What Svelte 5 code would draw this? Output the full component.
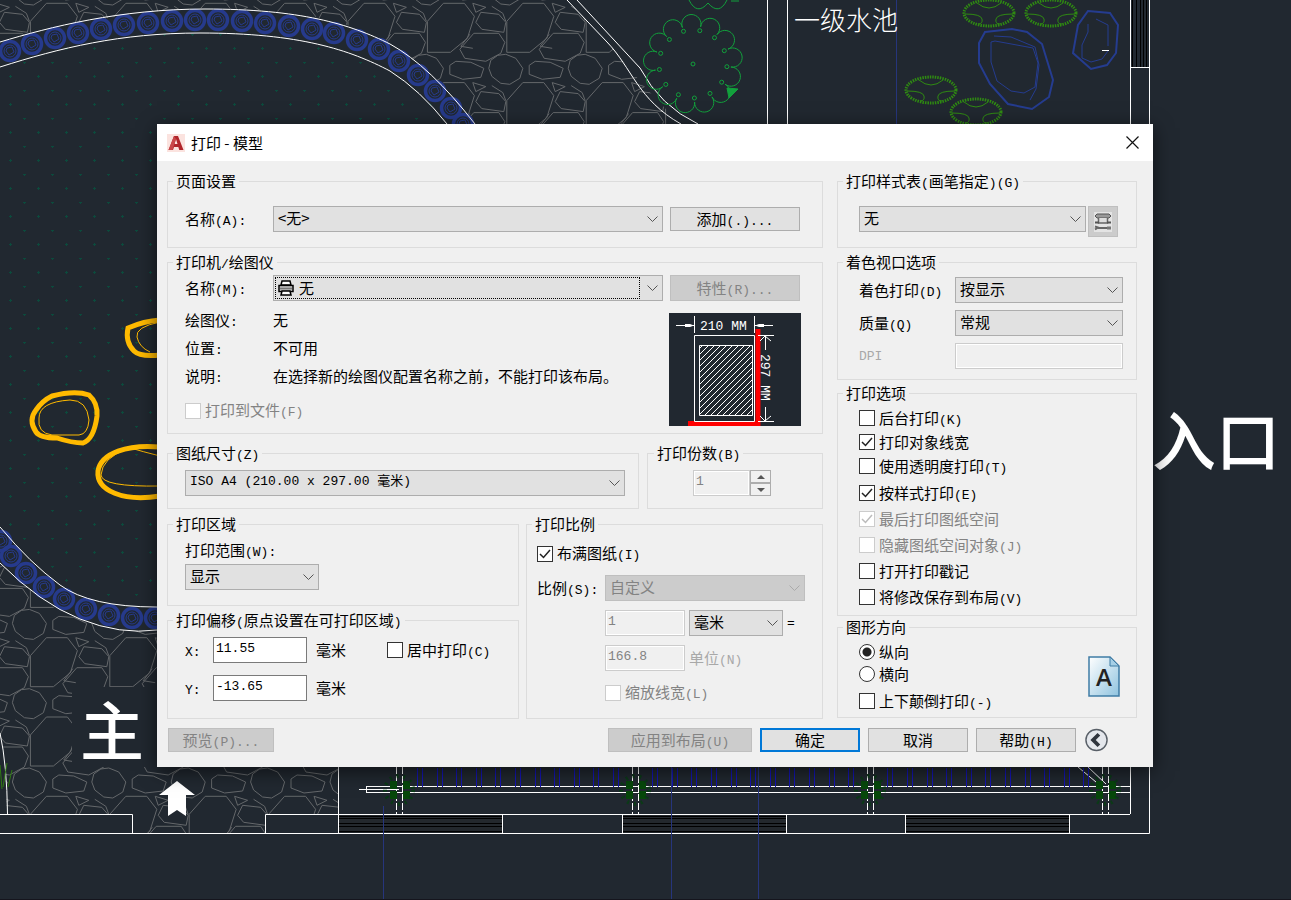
<script lang="ts">
	type Option = { label: string; checked?: boolean; disabled?: boolean };

	let copies = $state(1);
	let orientation = $state('portrait');

	const quickOptions: Option[] = [
		{ label: '后台打印(K)' },
		{ label: '打印对象线宽', checked: true },
		{ label: '使用透明度打印(T)' }
	];

	const styleOptions: Option[] = [
		{ label: '按样式打印(E)', checked: true },
		{ label: '最后打印图纸空间', checked: true, disabled: true },
		{ label: '隐藏图纸空间对象(J)', disabled: true },
		{ label: '打开打印戳记' },
		{ label: '将修改保存到布局(V)' }
	];

	const plotter = [
		['绘图仪:', '无'],
		['位置:', '不可用'],
		['说明:', '在选择新的绘图仪配置名称之前，不能打印该布局。']
	];

	// split a label into latin and chinese runs
	function runs(text: string) {
		return text.match(/[\x20-\x7e]+|[^\x20-\x7e]+/g) ?? [];
	}

	const range = (n: number) => Array.from({ length: n }, (_, i) => i);

	const pebbles = [
		[10, 51], [32, 44], [55, 38], [78, 33], [101, 29], [124, 25], [148, 23], [172, 21],
		[195, 20], [218, 20], [242, 21], [265, 23], [289, 26], [312, 29], [334, 33], [357, 40],
		[379, 49], [399, 61], [418, 75], [435, 91], [451, 108], [463, 124],
		[1, 541], [11, 556], [26, 573], [44, 587], [64, 599], [86, 609], [109, 615], [132, 618], [155, 618]
	];

	const tiles = range(17 * 12).map((i) => [(i % 17) * 79.4 - 125, Math.floor(i / 17) * 79.3 - 79]);
	const shrubs = [[989, 13], [1051, 13], [931, 90], [976, 112]];
	const posts = [399, 635, 870, 1105];
	const slats = range(36).map((i) => Math.round(417 + i * 19.6)).filter((x) => posts.every((p) => Math.abs(p - x - 3) > 12));
	const windows = [338, 622, 905];

	function polar(r: number, k: number) {
		const a = (k / 13) * Math.PI * 2 - 1.37;
		return [Math.round(r * Math.cos(a) * 10) / 10, Math.round(r * Math.sin(a) * 10) / 10];
	}

	const crown =
		`M${polar(38, 0)}` + range(13).map((k) => `A9.6 9.6 0 1 1 ${polar(38, k + 1)}`).join('');
</script>

{#snippet mixed(text: string)}{#each runs(text) as run}{#if /^[\x20-\x7e]/.test(run)}<span class="latin">{run}</span>{:else}{run}{/if}{/each}{/snippet}

{#snippet check(o: Option)}
	<label class="check" class:off={o.disabled}>
		<input type="checkbox" checked={o.checked} disabled={o.disabled} />
		<span>{@render mixed(o.label)}</span>
	</label>
{/snippet}

<main>
	<svg class="drawing" viewBox="0 0 1291 900" preserveAspectRatio="xMinYMin slice" aria-hidden="true">
		<defs>
			<g id="stones">
				<path d="M92 3h21l10 13-7 22-17 14H76V21zM50 12l18 2 7 8-2 10-22-3-6-7zM43 33h25l6 9-4 11-15 8-21-3-5-9zM25 61l15 1 13 6-3 9-18 2-13-5v-9zM42 3l13 4-10 5zM67 55l8-1 10 4 7 10-3 10-10 6-9-1-9-7-3-8 2-8zM75 21l-3-8-11-7M42 48l-12-2 9-12" />
			</g>
			<pattern id="dots" x="9" y="90" width="28" height="28" patternUnits="userSpaceOnUse">
				<path d="M0 14.5h3M1.5 13v3M14 .5h3M15.5 0v2" stroke="#0c4a3c" />
			</pattern>
			<clipPath id="paving">
				<path d="M0 0H567L607 42 645 87 680 124H475Q430 68 390 44C350 20 300 9 205 8Q120 10 0 42z" />
				<path d="M0 563Q40 603 80 619T157 630V767H338V814H265V833H133V814H7Q6 770 0 733zM72 687V767H157V687z" clip-rule="evenodd" />
			</clipPath>
			<g id="shrub" fill="none" stroke="#2f8a12">
				<ellipse rx="25" ry="13" stroke-width="3" stroke-dasharray="1.5 1" />
				<path d="M-12-10Q0 0 12-10M-24 1Q-8 1-7 6T-11 11M24 1Q8 1 7 6T11 11" />
			</g>
		</defs>

		<path d="M0 67C60 48 120 33 200 33C300 33 350 50 390 71Q430 98 447 124V607H157Q60 600 0 527z" fill="url(#dots)" />
		<g clip-path="url(#paving)" fill="none" stroke="#65686b">
			{#each tiles as [x, y]}
				<use href="#stones" transform="translate({x} {y})" />
			{/each}
		</g>

		<g fill="none" stroke="#263a8c">
			{#each pebbles as [x, y]}
				<circle cx={x} cy={y} r="9.5" stroke-width="3.5" />
				<circle cx={x} cy={y} r="6" />
				<path d="M{x - 3} {y - 3}l5-1 2 5-5 3-3-4z" />
			{/each}
		</g>

		<g fill="none" stroke="#fff">
			<path d="M0 42C50 27 120 9 205 9C300 9 350 24 390 44Q430 66 475 124M0 67C60 48 120 33 200 33C300 33 350 50 390 71Q420 90 447 124" />
			<path d="M0 527Q30 563 60 585T157 607M0 563Q40 603 80 619T157 630" />
			<path d="M567 0L607 42C632 68 638 100 681 124M577 0L640 68Q660 106 698 124" />
			<path d="M767.5 0V124M787.5 0V124M1130.5 0V814M1149.5 0V833.5H0M1131 67.5h18" />
			<path d="M0 814.5H132.5V833M265.5 833V814.5H1130M338.5 767V833M0 733Q7 765 7.5 814" />
			<path d="M366 786.5H1130M366 792.5H1130M366.5 786V793M359 789.5h40M1078 767l24 20M1088 767l18 17" />
		</g>
		<path d="M1102 50.5h7" stroke="#fff" />

		<g stroke="#000">
			<path d="M1132.5 0V67M1136.5 0V67M1140.5 0V67M1143.5 0V67M1146.5 0V67" />
			{#each windows as x}
				<rect x={x + 0.5} y="814.5" width="164" height="19" fill="#23282d" stroke="#fff" />
				<path d="M{x + 1} 816.5h163M{x + 1} 818.5h163M{x + 1} 823.5h163M{x + 1} 826.5h163M{x + 1} 831.5h163" />
			{/each}
		</g>

		<g stroke="#1414b4">
			{#each slats as x}
				<path d="M{x + 0.5} 768v19M{x + 5.5} 768v19" />
			{/each}
		</g>
		{#each posts as x}
			<path d="M{x - 2.5} 767v47M{x + 3.5} 767v47" stroke="#fff" stroke-dasharray="7 2" />
			<g fill="#07480b">
				<rect x={x - 9} y="781" width="7" height="8" /><rect x={x + 4} y="781" width="7" height="8" />
				<rect x={x - 9} y="791" width="7" height="8" /><rect x={x + 4} y="791" width="7" height="8" />
			</g>
			<circle cx={x} cy="790" r="14" fill="none" stroke="#0b3a17" stroke-width="4" stroke-dasharray="2 5" />
		{/each}
		<path d="M383.5 806V900M671.5 767V900M758.5 767V900M896.5 0V124" stroke="#26357c" />
		<path d="M0 899.5H1291" stroke="#15151d" />

		<g fill="none" stroke="#12a03c">
			<g transform="translate(693 64)">
				<path d={crown} />
				{#each range(13) as k}
					<circle cx={polar(34, k)[0]} cy={polar(34, k)[1]} r="2" />
				{/each}
				<circle r="2" />
				<path d="M34 24l11 1-9 9z" fill="#12a03c" />
			</g>
			<path d="M689 0Q697 16 708 3Q719 16 727 0M731 1h8" />
		</g>
		<path d="M0 765l2 24M7 763l-4 24M12 770l-4 17" stroke="#2f7a12" />
		{#each shrubs as [x, y]}
			<use href="#shrub" transform="translate({x} {y})" />
		{/each}

		<g fill="none" stroke="#253c8f">
			<path d="M985 32l27-3 15 3 15 12 11 36-4 17-17 12-24-5-18-20-11-21V43zM1088 11l22 2 8 12-2 28-9 12-16 4-18-16 5-28z" stroke-width="2" />
			<path d="M994 36l17 1 24 10 4 18-3 24-6 11M991 42l4-1 38 7 5 15-3 24-11 6-13-2-14-10-6-19zM1088 24v8l-6 13v13l9 4 11-3 6-8M1096 19l12 6v21" />
		</g>

		<g fill="none" stroke="#ffba00">
			<path d="M160 320Q144 321 128 328Q125 342 134 351Q140 357 160 355M52 396Q75 390 89 395Q98 403 97 416Q94 439 83 443Q72 443 57 438Q40 438 36 432Q28 420 36 410Q42 401 52 396zM160 447C128 444 101 453 98 471C96 491 124 502 160 496" stroke-width="5" />
			<path d="M160 322Q135 327 137 337T150 352M70 400Q87 400 89 420Q88 434 79 435H52Q37 433 39 418Q39 402 70 400zM127 447Q144 452 160 456M160 486Q102 487 101 475Q102 458 127 449" />
		</g>

		<path d="M177 781l18 14h-9v21l-9-6-9 6v-21h-9z" fill="#fff" />
		<text class="tag" x="794" y="30">一级水池</text>
		<text class="sign" x="80" y="755">主</text>
		<text class="sign" x="1152" y="465">入口</text>
	</svg>

	<form class="dialog" aria-labelledby="dialog-title" onsubmit={(e) => e.preventDefault()}>
		<header>
			<svg class="logo" viewBox="0 0 18 18" aria-hidden="true">
				<rect width="18" height="18" fill="#fbe3df" />
				<path d="M1.5 16L7 2h4l5.5 14h-4.2l-1-3H7l-1 3zM7.5 10h3L9 5z" fill="#b0252b" fill-rule="evenodd" />
				<path d="M7 2l2 3-3.5 11h-4z" fill="#c9474a" />
			</svg>
			<h1 id="dialog-title">打印 - 模型</h1>
			<button class="close" type="button" aria-label="关闭">
				<svg viewBox="0 0 13 13"><path d="M.5.5l12 12M12.5.5l-12 12" fill="none" stroke="#111" stroke-width="1.2" /></svg>
			</button>
		</header>

		<div class="body">
			<div class="columns">
				<div class="column">
					<fieldset class="page-setup">
						<legend>页面设置</legend>
						<label for="setup">{@render mixed('名称(A):')}</label>
						<select id="setup"><option>&lt;无&gt;</option></select>
						<button type="button">{@render mixed('添加(.)...')}</button>
					</fieldset>

					<fieldset class="printer">
						<legend>{@render mixed('打印机/绘图仪')}</legend>
						<div class="details">
							<div class="name">
								<label for="printer">{@render mixed('名称(M):')}</label>
								<div class="focused">
									<select id="printer"><option>无</option></select>
									<svg class="device" viewBox="0 0 16 16" aria-hidden="true">
										<path d="M4 1h8l1 4H3z" fill="#fff" stroke="#000" stroke-width="1.5" />
										<path d="M1 5.5h14v6H1z" fill="#ddd" stroke="#000" stroke-width="1.5" />
										<path d="M2 8.5h12" stroke="#777" stroke-width="2" />
										<path d="M4 11h8l1 4H3z" fill="#fff" stroke="#000" stroke-width="1.5" />
									</svg>
								</div>
							</div>
							<dl>
								{#each plotter as [term, value]}
									<dt>{@render mixed(term)}</dt>
									<dd>{value}</dd>
								{/each}
							</dl>
							{@render check({ label: '打印到文件(F)', disabled: true })}
						</div>
						<div class="sheet">
							<button type="button" disabled>{@render mixed('特性(R)...')}</button>
							<svg viewBox="0 0 132 113" role="img" aria-label="210 x 297 MM">
								<defs>
									<pattern id="hatch" width="6" height="6" patternUnits="userSpaceOnUse">
										<path d="M-1 7L7-1M-1 1l2-2M5 7l2-2" stroke="#fff" />
									</pattern>
								</defs>
								<rect width="132" height="113" fill="#212830" />
								<path d="M89 16v97M19 110.5h72" stroke="#f00" stroke-width="5" />
								<path d="M25.5 22.5h60v86h-60z" fill="#212830" stroke="#fff" />
								<path d="M30.5 32.5h53v70h-53z" fill="url(#hatch)" stroke="#fff" />
								<path d="M25.5 3v17M85.5 3v17M7 12.5h18M86 12.5h18M89 22.5h16M89 108.5h16M96.5 23v14M96.5 94v14M91 28l5-5 6 5M91 103l5 5 6-5" fill="none" stroke="#fff" />
								<path d="M16 11h5l4 1.5-4 1.5h-5zM95 11h-5l-4 1.5 4 1.5h5z" fill="#fff" />
								<text x="31" y="17">210 MM</text>
								<text transform="translate(92 41) rotate(90)">297 MM</text>
							</svg>
						</div>
					</fieldset>

					<div class="paper-row">
						<fieldset class="paper">
							<legend>{@render mixed('图纸尺寸(Z)')}</legend>
							<select class="mono" aria-label="图纸尺寸"><option>ISO A4 (210.00 x 297.00 毫米)</option></select>
						</fieldset>
						<fieldset class="copies">
							<legend>{@render mixed('打印份数(B)')}</legend>
							<div class="spin">
								<input type="text" value={copies} disabled aria-label="打印份数" />
								<div class="arrows">
									<button type="button" aria-label="增加" onclick={() => copies++}><i class="up"></i></button>
									<button type="button" aria-label="减少" onclick={() => (copies = Math.max(1, copies - 1))}><i class="down"></i></button>
								</div>
							</div>
						</fieldset>
					</div>

					<div class="lower">
						<div class="lower-left">
							<fieldset class="area">
								<legend>打印区域</legend>
								<label for="area">{@render mixed('打印范围(W):')}</label>
								<select id="area"><option>显示</option></select>
							</fieldset>
							<fieldset class="offset">
								<legend>{@render mixed('打印偏移(原点设置在可打印区域)')}</legend>
								<div class="axis">
									<label class="latin" for="x">X:</label>
									<input id="x" type="text" value="11.55" />
									<span>毫米</span>
									{@render check({ label: '居中打印(C)' })}
								</div>
								<div class="axis">
									<label class="latin" for="y">Y:</label>
									<input id="y" type="text" value="-13.65" />
									<span>毫米</span>
								</div>
							</fieldset>
						</div>
						<fieldset class="scale">
							<legend>打印比例</legend>
							{@render check({ label: '布满图纸(I)', checked: true })}
							<div class="ratio">
								<label for="ratio">{@render mixed('比例(S):')}</label>
								<select id="ratio" disabled><option>自定义</option></select>
							</div>
							<div class="units">
								<input type="text" value="1" disabled aria-label="图纸单位" />
								<select aria-label="单位"><option>毫米</option></select>
								<span class="latin">=</span>
							</div>
							<div class="units">
								<input id="units" type="text" value="166.8" disabled />
								<label class="faint" for="units">{@render mixed('单位(N)')}</label>
							</div>
							<div class="weights">{@render check({ label: '缩放线宽(L)', disabled: true })}</div>
						</fieldset>
					</div>
				</div>

				<div class="column right">
					<fieldset class="styles">
						<legend>{@render mixed('打印样式表(画笔指定)(G)')}</legend>
						<select aria-label="打印样式表"><option>无</option></select>
						<button class="edit" type="button" disabled aria-label="编辑">
							<svg viewBox="0 0 18 20">
								<rect width="18" height="20" fill="#e4e4e4" />
								<path d="M3 2h12l2 2-2 2H3L1 4z" fill="#999" stroke="#555" />
								<path d="M4.5 6v5h9V6" fill="#ddd" stroke="#666" stroke-width="1.5" />
								<path d="M1 10.5h4M13 10.5h4" stroke="#555" stroke-width="2" />
								<path d="M1 14.5l3 1-3 2M4 16h10" fill="none" stroke="#666" stroke-width="2" />
								<path d="M13 14.5h4v3h-4z" fill="#777" />
							</svg>
						</button>
					</fieldset>

					<fieldset class="viewport">
						<legend>着色视口选项</legend>
						<label for="shade">{@render mixed('着色打印(D)')}</label>
						<select id="shade"><option>按显示</option></select>
						<label for="quality">{@render mixed('质量(Q)')}</label>
						<select id="quality"><option>常规</option></select>
						<label class="latin faint" for="dpi">DPI</label>
						<input id="dpi" type="text" disabled />
					</fieldset>

					<fieldset class="options">
						<legend>打印选项</legend>
						<div class="tight">
							{#each quickOptions as option}{@render check(option)}{/each}
						</div>
						{#each styleOptions as option}{@render check(option)}{/each}
					</fieldset>

					<fieldset class="orientation">
						<legend>图形方向</legend>
						<div class="choices">
							<label class="check"><input type="radio" value="portrait" bind:group={orientation} />纵向</label>
							<label class="check"><input type="radio" value="landscape" bind:group={orientation} />横向</label>
							<div class="flip">{@render check({ label: '上下颠倒打印(-)' })}</div>
						</div>
						<svg class="page" viewBox="0 0 32 41" aria-hidden="true">
							<defs>
								<linearGradient id="sky" x2="1" y2="1">
									<stop offset="0" stop-color="#fff" />
									<stop offset="1" stop-color="#8fc3df" />
								</linearGradient>
							</defs>
							<path d="M1 1h21l9 9v30H1z" fill="url(#sky)" stroke="#3f7ca5" stroke-width="1.5" />
							<path d="M22 1v9h9z" fill="#a5cfe6" stroke="#3f7ca5" />
							<text x="16" y="30">A</text>
						</svg>
					</fieldset>
				</div>
			</div>

			<footer>
				<button class="preview" type="button" disabled>{@render mixed('预览(P)...')}</button>
				<button class="apply" type="button" disabled>{@render mixed('应用到布局(U)')}</button>
				<button class="primary" type="submit">确定</button>
				<button type="button">取消</button>
				<button type="button">{@render mixed('帮助(H)')}</button>
				<button class="less" type="button" aria-label="收起选项">
					<svg viewBox="0 0 25 25">
						<circle cx="12.5" cy="12.5" r="11" fill="#e4e7ec" stroke="#596068" stroke-width="1.5" />
						<path d="M15 6.5l-6 6 6 6" fill="none" stroke="#2f353d" stroke-width="4" />
					</svg>
				</button>
			</footer>
		</div>
	</form>
</main>

<style>
	:global(body) {
		margin: 0;
		background: #212830;
	}

	main {
		position: relative;
		box-sizing: border-box;
		min-height: 100vh;
		padding: 124px 138px 133px 157px;
		overflow: hidden;
		font-family: 'Noto Sans CJK SC', sans-serif;
		font-size: 15px;
		line-height: 16px;
		color: #000;
	}

	.drawing {
		position: absolute;
		inset: 0;
		width: 100%;
		height: 100%;
	}

	.tag,
	.sign {
		fill: #fff;
		font-family: 'Noto Sans CJK SC', sans-serif;
	}

	.tag {
		font-size: 26px;
		font-weight: 300;
	}

	.sign {
		font-size: 64px;
		font-weight: 500;
	}

	.dialog {
		position: relative;
		min-width: 996px;
		background: #f0f0f0;
		box-shadow: 0 4px 18px rgba(0, 0, 0, 0.6);
	}

	header {
		display: flex;
		align-items: center;
		height: 37px;
		padding: 0 14px 0 10px;
		background: #fff;
	}

	.logo {
		width: 18px;
		height: 18px;
	}

	h1 {
		margin: 0 auto 0 6px;
		font-size: 15px;
		font-weight: 400;
		line-height: 18px;
	}

	.close {
		width: 13px;
		height: 13px;
		padding: 0;
		border: 0;
		background: none;
	}

	svg {
		display: block;
	}

	.body {
		padding: 12px 16px 15px 10px;
	}

	.columns {
		display: grid;
		grid-template-columns: 1fr 300px;
		gap: 14px;
	}

	.column {
		display: flex;
		flex-direction: column;
		gap: 6px;
	}

	.latin {
		font-family: 'Liberation Mono', monospace;
		font-size: 13px;
		line-height: 1;
	}

	fieldset {
		box-sizing: border-box;
		min-width: 0;
		margin: 0;
		border: 1px solid #dcdcdc;
	}

	legend {
		height: 16px;
		margin-left: 6px;
		padding: 0 3px;
		white-space: nowrap;
	}

	/* the legend's offset counts from the padding edge, so pull it back */
	.page-setup legend,
	.printer legend,
	.paper legend,
	.area legend,
	.offset legend {
		margin-left: -12px;
	}

	button,
	select,
	input {
		box-sizing: border-box;
		margin: 0;
		border-radius: 0;
		font: inherit;
		color: inherit;
	}

	button {
		height: 24px;
		padding: 0;
		border: 1px solid #adadad;
		background: #e1e1e1;
		line-height: 20px;
		white-space: nowrap;
	}

	button:disabled {
		border-color: #bfbfbf;
		background: #ccc;
		color: #838383;
	}

	select {
		appearance: none;
		width: 100%;
		min-width: 0;
		height: 26px;
		padding: 0 20px 2px 4px;
		border: 1px solid #adadad;
		background: #e1e1e1 url("data:image/svg+xml,%3Csvg xmlns='http://www.w3.org/2000/svg' width='11' height='7'%3E%3Cpath d='M.5.5l5 5 5-5' fill='none' stroke='%23555'/%3E%3C/svg%3E") no-repeat right 4px center;
		line-height: 22px;
	}

	select:disabled {
		border-color: #bfbfbf;
		background-color: #ccc;
		color: #838383;
		opacity: 1;
	}

	#ratio {
		background-image: url("data:image/svg+xml,%3Csvg xmlns='http://www.w3.org/2000/svg' width='11' height='7'%3E%3Cpath d='M.5.5l5 5 5-5' fill='none' stroke='%23aaa'/%3E%3C/svg%3E");
	}

	.mono {
		font-family: 'Liberation Mono', 'Noto Sans CJK SC', monospace;
		font-size: 13px;
	}

	input[type='text'] {
		height: 26px;
		padding: 0 2px 3px;
		border: 1px solid #7a7a7a;
		background: #fff;
		font-family: 'Liberation Mono', monospace;
		font-size: 13px;
	}

	input[type='text']:disabled {
		border-color: #ccc;
		background: #f0f0f0;
		box-shadow: inset 0 0 0 1px #fff;
		color: #838383;
	}

	.check {
		display: flex;
		align-items: center;
		gap: 4px;
		white-space: nowrap;
	}

	.check input {
		flex: none;
		appearance: none;
		width: 16px;
		height: 16px;
		border: 1px solid #333;
		background: #fff center no-repeat;
	}

	.check input[type='checkbox']:checked {
		background-image: url("data:image/svg+xml,%3Csvg xmlns='http://www.w3.org/2000/svg' width='12' height='10'%3E%3Cpath d='M1 5l3.5 3.5L11 1' fill='none' stroke='%23222' stroke-width='1.5'/%3E%3C/svg%3E");
	}

	.check input[type='checkbox']:disabled {
		border-color: #ccc;
	}

	.check input[type='checkbox']:checked:disabled {
		background-image: url("data:image/svg+xml,%3Csvg xmlns='http://www.w3.org/2000/svg' width='12' height='10'%3E%3Cpath d='M1 5l3.5 3.5L11 1' fill='none' stroke='%23bbb' stroke-width='1.5'/%3E%3C/svg%3E");
	}

	.check input[type='radio'] {
		border-radius: 50%;
	}

	.check input[type='radio']:checked {
		background: radial-gradient(circle, #222 4px, #fff 5px);
	}

	.off {
		color: #838383;
	}

	.faint {
		color: #a8a8a8;
	}

	.page-setup {
		display: grid;
		grid-template-columns: 88px 1fr 130px;
		align-items: center;
		padding: 17px 22px 15px 17px;
	}

	.page-setup select {
		width: auto;
		margin-right: 7px;
	}

	.printer {
		display: flex;
		gap: 6px;
		padding: 5px 21px 7px 17px;
	}

	.details {
		flex: 1;
	}

	.name {
		display: grid;
		grid-template-columns: 88px 1fr;
		align-items: center;
	}

	.focused {
		position: relative;
	}

	.focused::after {
		content: '';
		position: absolute;
		inset: 2px 23px 2px 2px;
		border: 1px dotted #000;
		pointer-events: none;
	}

	.focused select {
		display: block;
		padding: 0 20px 0 25px;
	}

	.device {
		position: absolute;
		left: 5px;
		top: 5px;
		width: 16px;
		height: 16px;
		pointer-events: none;
	}

	dl {
		display: grid;
		grid-template-columns: 88px 1fr;
		margin: 5px 0 12px;
		line-height: 28px;
	}

	dd {
		margin: 0;
		white-space: nowrap;
	}

	.sheet {
		width: 132px;
	}

	.sheet button {
		display: block;
		width: 130px;
		height: 26px;
		margin: 0 1px 12px;
	}

	.sheet svg {
		width: 132px;
		height: 113px;
	}

	.sheet text {
		fill: #fff;
		font-family: 'Liberation Mono', monospace;
		font-size: 13px;
	}

	.paper-row {
		display: flex;
		gap: 8px;
		margin-top: 5px;
	}

	.paper {
		flex: 1;
		padding: 9px 13px 12px 17px;
	}

	.paper select {
		display: block;
	}

	.copies {
		width: 176px;
		padding: 9px 0 12px;
	}

	.spin {
		display: flex;
		width: 78px;
		margin-left: 45px;
	}

	.spin input {
		width: 57px;
	}

	.arrows {
		display: flex;
		flex-direction: column;
		width: 21px;
	}

	.arrows button {
		display: flex;
		align-items: center;
		justify-content: center;
		height: 13px;
		background: #f0f0f0;
	}

	.up,
	.down {
		border: 4px solid transparent;
		border-top: 0;
		border-bottom-color: #555;
	}

	.down {
		border-bottom: 0;
		border-top: 4px solid #555;
	}

	.lower {
		display: grid;
		grid-template-columns: 352fr 297fr;
		gap: 7px;
		margin-top: 1px;
	}

	.lower-left {
		display: flex;
		flex-direction: column;
		gap: 6px;
	}

	.area {
		padding: 8px 17px 15px;
	}

	.area label {
		display: block;
		line-height: 20px;
	}

	.area select {
		display: block;
		width: 134px;
		margin-top: 4px;
	}

	.offset {
		flex: 1;
		padding: 9px 17px 17px;
	}

	.axis {
		display: flex;
		align-items: center;
	}

	.axis + .axis {
		margin-top: 12px;
	}

	.axis > label.latin {
		width: 28px;
		padding-top: 4px;
	}

	.axis input[type='text'] {
		width: 94px;
	}

	.axis > span {
		width: 71px;
		margin-left: 9px;
	}

	.scale {
		padding: 13px 17px 12px 10px;
	}

	.scale legend {
		margin-left: -5px;
	}

	.ratio {
		display: grid;
		grid-template-columns: 68px 1fr;
		align-items: center;
		margin-top: 13px;
	}

	.units {
		display: flex;
		align-items: center;
		gap: 4px;
		margin: 9px 0 0 68px;
	}

	.units input {
		width: 80px;
	}

	.units select {
		width: 94px;
	}

	.weights {
		margin: 13px 0 0 68px;
	}

	.styles {
		display: flex;
		align-items: flex-start;
		gap: 2px;
		padding: 17px 18px 10px 21px;
	}

	.right legend {
		margin-left: -16px;
	}

	.edit {
		display: flex;
		flex: none;
		align-items: center;
		justify-content: center;
		width: 30px;
		height: 31px;
	}

	.edit svg {
		width: 18px;
		height: 20px;
	}

	.viewport {
		display: grid;
		grid-template-columns: 96px 1fr;
		align-items: center;
		row-gap: 7px;
		padding: 7px 13px 10px 21px;
	}

	.viewport input {
		width: 100%;
	}

	.options {
		margin-top: -1px;
		padding: 5px 21px;
	}

	.options .check {
		height: 26px;
	}

	.tight {
		margin-bottom: 2px;
	}

	.options .tight .check {
		height: 24px;
	}

	.orientation {
		display: flex;
		justify-content: space-between;
		align-items: center;
		margin-top: -3px;
		padding: 6px 16px 5px 21px;
	}

	.choices .check {
		height: 22px;
	}

	.flip {
		margin-top: 5px;
	}

	.page {
		width: 32px;
		height: 41px;
	}

	.page text {
		font-family: 'Open Sans', sans-serif;
		font-size: 24px;
		font-weight: 600;
		text-anchor: middle;
		fill: #222;
	}

	footer {
		display: flex;
		align-items: center;
		gap: 8px;
		padding: 9px 28px 0 1px;
	}

	footer button {
		width: 100px;
	}

	footer .preview {
		width: 106px;
		margin-right: auto;
	}

	footer .apply {
		width: 144px;
	}

	footer .primary {
		border: 2px solid #0078d7;
		line-height: 18px;
	}

	footer .less {
		width: 25px;
		border: 0;
		background: none;
	}

	.less svg {
		width: 25px;
		height: 24px;
	}
</style>
